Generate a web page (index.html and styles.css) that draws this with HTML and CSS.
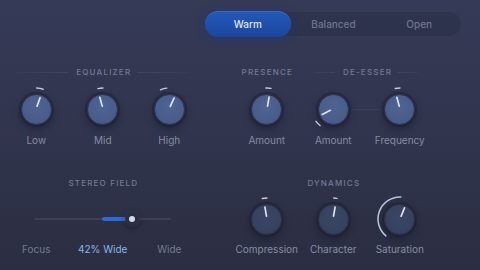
FILE: index.html
```html
<!DOCTYPE html>
<html lang="en">
<head>
<meta charset="utf-8">
<title>Voice Tone</title>
<link rel="stylesheet" href="styles.css">
</head>
<body>
<div class="app">
  <header class="topbar">
    <div class="seg">
      <button class="seg-btn active">Warm</button>
      <button class="seg-btn">Balanced</button>
      <button class="seg-btn">Open</button>
    </div>
  </header>

  <div class="row row-top">
    <section class="sec sec-3">
      <h3 class="title lined"><span>Equalizer</span></h3>
      <div class="knobs">
        <div class="ctl">
          <div class="knob"><div class="cap"></div>
            <svg viewBox="0 0 48 48"><path class="mark" d="M24 3A21 21 0 0 1 30.49 4.03" transform="rotate(2 24 24)"/><line class="ind" x1="24" y1="21" x2="24" y2="12" transform="rotate(20 24 24)"/></svg>
          </div>
          <div class="lbl">Low</div>
        </div>
        <div class="ctl">
          <div class="knob"><div class="cap"></div>
            <svg viewBox="0 0 48 48"><path class="mark" d="M24 3A21 21 0 0 1 29.08 3.62" transform="rotate(-14 24 24)"/><line class="ind" x1="24" y1="21" x2="24" y2="12" transform="rotate(-15 24 24)"/></svg>
          </div>
          <div class="lbl">Mid</div>
        </div>
        <div class="ctl">
          <div class="knob"><div class="cap"></div>
            <svg viewBox="0 0 48 48"><path class="mark" d="M24 3A21 21 0 0 1 30.49 4.03" transform="rotate(-24 24 24)"/><line class="ind" x1="24" y1="21" x2="24" y2="12" transform="rotate(25 24 24)"/></svg>
          </div>
          <div class="lbl">High</div>
        </div>
      </div>
    </section>

    <div class="group">
      <section class="sec sec-1">
        <h3 class="title"><span>Presence</span></h3>
        <div class="knobs">
          <div class="ctl">
            <div class="knob"><div class="cap"></div>
              <svg viewBox="0 0 48 48"><path class="mark" d="M24 3A21 21 0 0 1 29.08 3.62" transform="rotate(-3 24 24)"/><line class="ind" x1="24" y1="21" x2="24" y2="12" transform="rotate(10 24 24)"/></svg>
            </div>
            <div class="lbl">Amount</div>
          </div>
        </div>
      </section>

      <section class="sec sec-2">
        <h3 class="title lined"><span>De-esser</span></h3>
        <div class="knobs">
          <div class="ctl">
            <div class="knob linked"><div class="cap"></div>
              <svg viewBox="0 0 48 48"><path class="mark" d="M24 3A21 21 0 0 1 29.79 3.81" transform="rotate(-142 24 24)"/><line class="ind" x1="24" y1="21" x2="24" y2="12" transform="rotate(-117 24 24)"/></svg>
            </div>
            <div class="lbl">Amount</div>
          </div>
          <div class="ctl">
            <div class="knob"><div class="cap"></div>
              <svg viewBox="0 0 48 48"><path class="mark" d="M24 3A21 21 0 0 1 28.72 3.54" transform="rotate(-13 24 24)"/><line class="ind" x1="24" y1="21" x2="24" y2="12" transform="rotate(-15 24 24)"/></svg>
            </div>
            <div class="lbl">Frequency</div>
          </div>
        </div>
      </section>
    </div>
  </div>

  <div class="row row-bottom">
    <section class="sec sec-3">
      <h3 class="title"><span>Stereo Field</span></h3>
      <div class="slider">
        <div class="track">
          <div class="fill"></div>
          <div class="thumb"></div>
        </div>
      </div>
      <div class="slider-lbls">
        <div class="lbl">Focus</div>
        <div class="lbl value">42% Wide</div>
        <div class="lbl">Wide</div>
      </div>
    </section>

    <section class="sec sec-3 dyn">
      <h3 class="title"><span>Dynamics</span></h3>
      <div class="knobs">
        <div class="ctl">
          <div class="knob"><div class="cap"></div>
            <svg viewBox="0 0 48 48"><path class="mark" d="M24 3A21 21 0 0 1 28.72 3.54" transform="rotate(-13 24 24)"/><line class="ind" x1="24" y1="21" x2="24" y2="12" transform="rotate(-10 24 24)"/></svg>
          </div>
          <div class="lbl">Compression</div>
        </div>
        <div class="ctl">
          <div class="knob"><div class="cap"></div>
            <svg viewBox="0 0 48 48"><path class="mark" d="M24 3A21 21 0 0 1 27.28 3.26" transform="rotate(2 24 24)"/><line class="ind" x1="24" y1="21" x2="24" y2="12" transform="rotate(10 24 24)"/></svg>
          </div>
          <div class="lbl">Character</div>
        </div>
        <div class="ctl">
          <div class="knob"><div class="cap"></div>
            <svg viewBox="0 0 48 48"><path class="arc" d="M24 2A22 22 0 0 1 37.55 41.34" transform="rotate(-140 24 24)"/><line class="ind" x1="24" y1="21" x2="24" y2="12" transform="rotate(22 24 24)"/></svg>
          </div>
          <div class="lbl">Saturation</div>
        </div>
      </div>
    </section>
  </div>
</div>
</body>
</html>
```

FILE: styles.css
```css
html, body {
  margin: 0;
  padding: 0;
}
body {
  width: 480px;
  height: 270px;
  overflow: hidden;
  background: linear-gradient(180deg, #353a57 0%, #31354e 45%, #2b2e41 100%);
  font-family: Inter, "Liberation Sans", sans-serif;
}
.app {
  padding-top: 11px;
}
.topbar {
  display: flex;
  justify-content: flex-end;
  padding-right: 18px;
}
.seg {
  display: flex;
  width: 257px;
  height: 26px;
  border-radius: 13px;
  background: rgba(28, 30, 48, 0.22);
  box-shadow: inset 0 0 0 1px rgba(255, 255, 255, 0.04);
}
.seg-btn {
  flex: 1;
  border: 0;
  padding: 0;
  background: none;
  font: 500 10px/26px Inter, "Liberation Sans", sans-serif;
  color: #6f758d;
  border-radius: 13px;
}
.seg-btn.active {
  background: linear-gradient(180deg, #2459b8 0%, #1b469e 100%);
  color: #dfe6f6;
  box-shadow: 0 2px 8px rgba(18, 55, 150, 0.5), inset 0 1px 0 rgba(255, 255, 255, 0.1);
}

.row {
  display: flex;
  gap: 31px;
  padding-left: 3px;
}
.group {
  display: flex;
}
.row-top {
  margin-top: 30px;
}
.row-bottom {
  margin-top: 31px;
}
.sec-3 { width: 199.5px; }
.sec-2 { width: 133px; }
.sec-1 { width: 66.5px; }

.title {
  margin: 0;
  height: 10px;
  font: 500 8px/10px Inter, "Liberation Sans", sans-serif;
  letter-spacing: 1.2px;
  color: #737a93;
  text-transform: uppercase;
  text-align: center;
  white-space: nowrap;
}
.title span {
  padding-left: 1.2px;
}
.title.lined {
  display: flex;
  align-items: center;
  padding: 0 14px;
}
.title.lined::before,
.title.lined::after {
  content: "";
  flex: 1;
  height: 1px;
  background: linear-gradient(90deg, rgba(255, 255, 255, 0.02), rgba(255, 255, 255, 0.07));
}
.title.lined::after {
  background: linear-gradient(90deg, rgba(255, 255, 255, 0.07), rgba(255, 255, 255, 0.02));
}
.title.lined span {
  padding: 0 6px 0 8px;
}

.knobs {
  display: flex;
  margin-top: 8px;
}
.row-bottom .knobs {
  margin-top: 7px;
}
.ctl {
  width: 66.5px;
  display: flex;
  flex-direction: column;
  align-items: center;
}
.knob {
  position: relative;
  width: 48px;
  height: 48px;
  display: grid;
  place-items: center;
}
.cap {
  width: 31px;
  height: 31px;
  box-sizing: border-box;
  border-radius: 50%;
  background: radial-gradient(circle at 50% 40%, #4f6494 0%, #4a5e8b 55%, #43558a 100%);
  border: 1px solid #2b3452;
  box-shadow: 0 0 0 2px rgba(28, 31, 50, 0.45), 0 3px 8px rgba(8, 10, 22, 0.45);
}
.dyn .cap {
  background: radial-gradient(circle at 50% 40%, #3b4665 0%, #37425f 60%, #333d5a 100%);
  border-color: #2a3047;
}
.knob svg {
  position: absolute;
  inset: 0;
  width: 48px;
  height: 48px;
  overflow: visible;
}
.mark {
  fill: none;
  stroke: #c3cbdf;
  stroke-width: 1.4;
  stroke-linecap: round;
}
.arc {
  fill: none;
  stroke: #b8c4dc;
  stroke-width: 1.5;
  stroke-linecap: round;
}
.ind {
  stroke: #dde4f2;
  stroke-width: 1.7;
  stroke-linecap: round;
}
.knob.linked::after {
  content: "";
  position: absolute;
  left: 43px;
  top: 24px;
  width: 29px;
  height: 1px;
  background: rgba(255, 255, 255, 0.05);
}

.lbl {
  font: 400 10px/13px Inter, "Liberation Sans", sans-serif;
  color: #868ca3;
  margin-top: 1px;
  white-space: nowrap;
}
.row-bottom .lbl {
  margin-top: 0;
  line-height: 12px;
}

.slider {
  height: 48px;
  margin-top: 7px;
  display: flex;
  align-items: center;
  padding: 0 32px 0 31px;
}
.track {
  position: relative;
  flex: 1;
  height: 2px;
  border-radius: 1px;
  background: #3b3f58;
}
.fill {
  position: absolute;
  left: 50%;
  width: 21.5%;
  top: -1px;
  height: 4px;
  border-radius: 2px;
  background: #2e6bd2;
}
.thumb {
  position: absolute;
  left: 71.5%;
  top: 50%;
  width: 14px;
  height: 14px;
  margin: -7px 0 0 -7px;
  border-radius: 50%;
  background: #2a2e45;
  box-shadow: 0 0 0 1px rgba(255, 255, 255, 0.05), 0 2px 6px rgba(0, 0, 0, 0.45);
  display: grid;
  place-items: center;
}
.thumb::after {
  content: "";
  width: 6px;
  height: 6px;
  border-radius: 50%;
  background: #d3daea;
}
.slider-lbls {
  display: flex;
}
.slider-lbls .lbl {
  width: 66.5px;
  text-align: center;
  color: #737a92;
}
.slider-lbls .lbl.value {
  color: #8fb2ea;
}
```
